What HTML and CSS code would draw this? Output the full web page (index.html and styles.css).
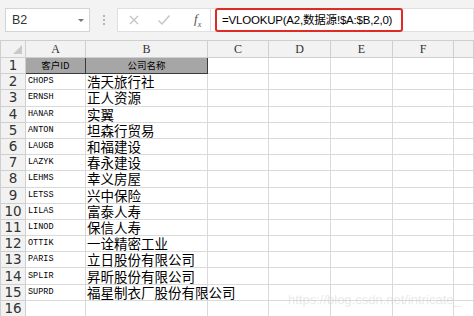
FILE: index.html
```html
<!DOCTYPE html>
<html lang="zh-CN">
<head>
    <meta charset="UTF-8">
    <title>VLOOKUP</title>
    <link rel="stylesheet" href="styles.css">
</head>
<body>

    <div class="toolbar">
        <div class="namebox">
            <span>B2</span>
            <span class="arrow"></span>
        </div>
        <div class="dots">
            <i></i><i></i><i></i>
        </div>
        <div class="fxbox">
            <svg class="ico" width="12" height="12" viewBox="0 0 12 12">
                <path d="M2 2 L10 10 M10 2 L2 10" stroke="#c4c4c4" stroke-width="1.3" fill="none"/>
            </svg>
            <svg class="ico" width="14" height="12" viewBox="0 0 14 12">
                <path d="M1.5 6.5 L5 10 L12.5 1.5" stroke="#c4c4c4" stroke-width="1.4" fill="none"/>
            </svg>
            <span class="fx">f<sub>x</sub></span>
        </div>
        <div class="formula">
            <span class="mark">=VLOOKUP(A2,数据源!$A:$B,2,0)</span>
        </div>
    </div>

    <table class="sheet">
        <colgroup>
            <col class="c-head">
            <col class="c-a">
            <col class="c-b">
            <col class="c-std">
            <col class="c-wide">
            <col class="c-wide">
            <col class="c-std">
            <col>
        </colgroup>
        <thead>
            <tr>
                <th class="corner"><span class="tri"></span></th>
                <th>A</th>
                <th>B</th>
                <th>C</th>
                <th>D</th>
                <th>E</th>
                <th>F</th>
                <th></th>
            </tr>
        </thead>
        <tbody>
            <tr><th>1</th><td class="title">客户ID</td><td class="title">公司名称</td><td></td><td></td><td></td><td></td><td></td></tr>
            <tr><th>2</th><td class="id">CHOPS</td><td class="name">浩天旅行社</td><td></td><td></td><td></td><td></td><td></td></tr>
            <tr><th>3</th><td class="id">ERNSH</td><td class="name">正人资源</td><td></td><td></td><td></td><td></td><td></td></tr>
            <tr><th>4</th><td class="id">HANAR</td><td class="name">实翼</td><td></td><td></td><td></td><td></td><td></td></tr>
            <tr><th>5</th><td class="id">ANTON</td><td class="name">坦森行贸易</td><td></td><td></td><td></td><td></td><td></td></tr>
            <tr><th>6</th><td class="id">LAUGB</td><td class="name">和福建设</td><td></td><td></td><td></td><td></td><td></td></tr>
            <tr><th>7</th><td class="id">LAZYK</td><td class="name">春永建设</td><td></td><td></td><td></td><td></td><td></td></tr>
            <tr><th>8</th><td class="id">LEHMS</td><td class="name">幸义房屋</td><td></td><td></td><td></td><td></td><td></td></tr>
            <tr><th>9</th><td class="id">LETSS</td><td class="name">兴中保险</td><td></td><td></td><td></td><td></td><td></td></tr>
            <tr><th>10</th><td class="id">LILAS</td><td class="name">富泰人寿</td><td></td><td></td><td></td><td></td><td></td></tr>
            <tr><th>11</th><td class="id">LINOD</td><td class="name">保信人寿</td><td></td><td></td><td></td><td></td><td></td></tr>
            <tr><th>12</th><td class="id">OTTIK</td><td class="name">一诠精密工业</td><td></td><td></td><td></td><td></td><td></td></tr>
            <tr><th>13</th><td class="id">PARIS</td><td class="name">立日股份有限公司</td><td></td><td></td><td></td><td></td><td></td></tr>
            <tr><th>14</th><td class="id">SPLIR</td><td class="name">昇昕股份有限公司</td><td></td><td></td><td></td><td></td><td></td></tr>
            <tr><th>15</th><td class="id">SUPRD</td><td class="name">福星制衣厂股份有限公司</td><td></td><td></td><td></td><td></td><td></td></tr>
            <tr><th>16</th><td></td><td></td><td></td><td></td><td></td><td></td><td></td></tr>
        </tbody>
    </table>

    <div class="watermark">https://blog.csdn.net/intricate_</div>

</body>
</html>
```

FILE: styles.css
```css
body {
    margin: 0;
    padding: 0;
    width: 474px;
    height: 316px;
    overflow: hidden;
    position: relative;
    background-color: #fff;
    font-family: "Liberation Sans", Arial, "Noto Sans CJK SC", sans-serif;
    color: #000;
}

/* formula bar */
.toolbar {
    height: 40px;
    box-sizing: border-box;
    padding-top: 8px;
    background-color: #f3f3f3;
    display: flex;
    align-items: flex-start;
}
.namebox {
    margin-left: 5px;
    width: 85px;
    height: 24px;
    box-sizing: border-box;
    background-color: #fff;
    border: 1px solid #d4d4d4;
    display: flex;
    align-items: center;
    justify-content: space-between;
    padding: 0 5px 0 6px;
    font-size: 12.5px;
    color: #333;
}
.arrow {
    width: 0;
    height: 0;
    border-left: 3px solid transparent;
    border-right: 3px solid transparent;
    border-top: 3px solid #777;
}
.dots {
    width: 27px;
    height: 24px;
    display: flex;
    flex-direction: column;
    align-items: center;
    justify-content: center;
    gap: 2px;
}
.dots i {
    width: 2px;
    height: 2px;
    background-color: #b5b5b5;
}
.fxbox {
    width: 93px;
    height: 24px;
    box-sizing: border-box;
    background-color: #fff;
    border: 1px solid #e0e0e0;
    border-right: none;
    display: flex;
    align-items: center;
    padding-left: 10px;
}
.ico {
    margin-right: 17px;
}
.fx {
    margin-left: 6px;
    font-family: "Liberation Serif", serif;
    font-style: italic;
    font-size: 13px;
    color: #555;
}
.fx sub {
    font-size: 8px;
}
.formula {
    flex: 1;
    height: 24px;
    box-sizing: border-box;
    background-color: #fff;
    border: 1px solid #e0e0e0;
    padding-left: 4px;
    display: flex;
    align-items: center;
}
.mark {
    display: block;
    width: 188px;
    height: 24px;
    box-sizing: border-box;
    border: 2px solid #e02a24;
    border-radius: 3px;
    font-size: 11.5px;
    letter-spacing: -0.2px;
    line-height: 20px;
    padding-left: 5px;
    white-space: nowrap;
    overflow: hidden;
}

/* grid */
.sheet {
    border-collapse: collapse;
    table-layout: fixed;
    width: 474px;
}
.c-head { width: 25px; }
.c-a { width: 60px; }
.c-b { width: 122px; }
.c-std { width: 61px; }
.c-wide { width: 62px; }

.sheet th,
.sheet td {
    padding: 0;
    border: 1px solid #dadada;
    overflow: hidden;
    white-space: nowrap;
}
.sheet thead th {
    height: 16px;
    background-color: #f2f2f2;
    border-color: #cfcfcf;
    font-family: "Liberation Serif", serif;
    font-weight: normal;
    font-size: 12px;
    color: #333;
}
.sheet tbody th {
    height: 15.2px;
    background-color: #f2f2f2;
    border-color: #cfcfcf;
    font-family: "DejaVu Sans", sans-serif;
    font-weight: normal;
    font-size: 13.5px;
    line-height: 15px;
    color: #333;
    text-align: center;
}
.corner {
    position: relative;
}
.tri {
    position: absolute;
    right: 3px;
    bottom: 3px;
    width: 0;
    height: 0;
    border-left: 9px solid transparent;
    border-bottom: 9px solid #c9c9c9;
}
.sheet td {
    height: 15.2px;
    line-height: 15px;
}
.sheet td.title {
    background-color: #a6a6a6;
    border: 1px solid #3a3a3a;
    text-align: center;
    font-family: "Noto Sans CJK SC", sans-serif;
    font-size: 9.5px;
}
.sheet td.id {
    font-family: "Liberation Mono", "Courier New", monospace;
    font-size: 8.5px;
    padding-left: 2px;
}
.sheet td.name {
    font-family: "Noto Sans CJK SC", sans-serif;
    font-size: 13.5px;
    overflow: visible;
    padding-left: 1px;
}

.watermark {
    position: absolute;
    left: 288px;
    top: 292px;
    font-size: 13px;
    color: rgba(190, 190, 190, 0.35);
}
```
